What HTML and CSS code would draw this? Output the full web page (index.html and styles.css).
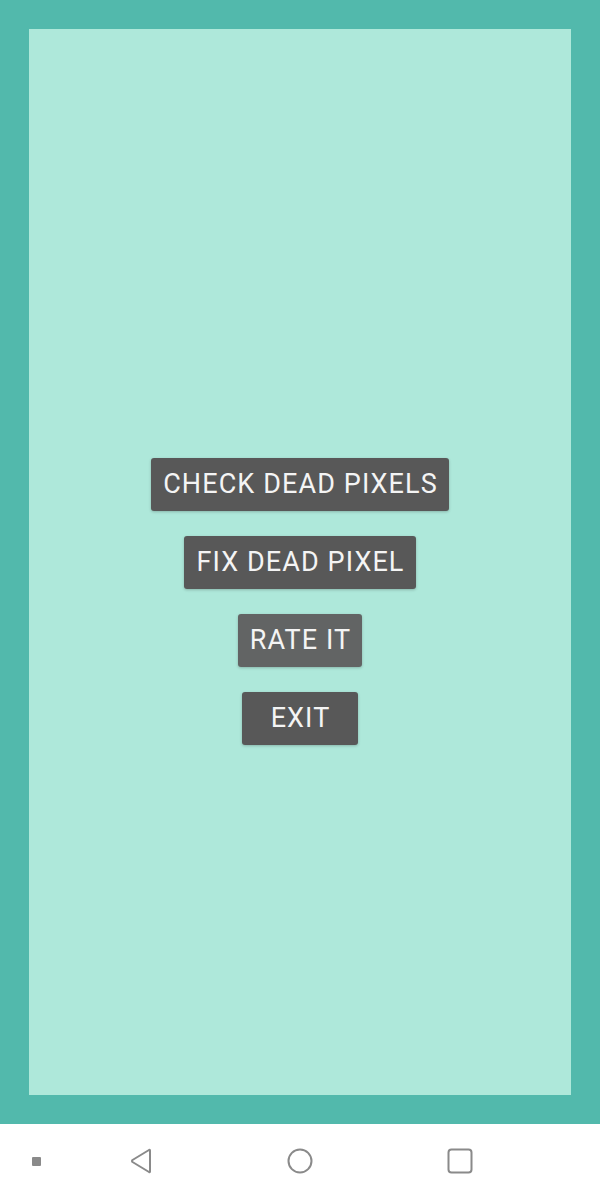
FILE: index.html
```html
<!DOCTYPE html>
<html>
<head>
<meta charset="utf-8">
<link rel="stylesheet" href="styles.css">
</head>
<body>
<div class="frame">
  <div class="panel">
    <div class="menu">
      <button class="btn">CHECK DEAD PIXELS</button>
      <button class="btn">FIX DEAD PIXEL</button>
      <button class="btn btn-light">RATE IT</button>
      <button class="btn">EXIT</button>
    </div>
  </div>
</div>
<nav class="navbar">
  <span class="nav-dot"></span>
  <svg class="nav-icon nav-back" width="26" height="26" viewBox="0 0 26 26"><path d="M21 2.5 L21 23.5 Q21 24.5 20 24 L3.5 14 Q2.5 13 3.5 12 L20 2 Q21 1.5 21 2.5 Z" fill="none" stroke="#8a8a8a" stroke-width="2" stroke-linejoin="round"/></svg>
  <svg class="nav-icon nav-home" width="26" height="26" viewBox="0 0 26 26"><circle cx="13" cy="13" r="11.5" fill="none" stroke="#8a8a8a" stroke-width="2"/></svg>
  <svg class="nav-icon nav-recent" width="26" height="26" viewBox="0 0 26 26"><rect x="1.5" y="1.5" width="23" height="23" rx="3" fill="none" stroke="#8a8a8a" stroke-width="2"/></svg>
</nav>
</body>
</html>
```

FILE: styles.css
```css
html, body {
  margin: 0;
  padding: 0;
}
body {
  width: 600px;
  height: 1200px;
  display: flex;
  flex-direction: column;
  font-family: Roboto, "Noto Sans", sans-serif;
  background: #ffffff;
}
.frame {
  height: 1124px;
  box-sizing: border-box;
  padding: 29px;
  background: #52b9ac;
}
.panel {
  height: 100%;
  box-sizing: border-box;
  background: #aee8da;
  padding-top: 78px;
  display: flex;
  flex-direction: column;
  justify-content: center;
}
.menu {
  display: flex;
  flex-direction: column;
  align-items: center;
  gap: 25px;
}
.btn {
  height: 53px;
  min-width: 116px;
  padding: 0 11px 0 12px;
  border: none;
  border-radius: 3px;
  background: #585858;
  color: #f4f4f4;
  font-family: Roboto, "Noto Sans", sans-serif;
  font-size: 27px;
  font-weight: 400;
  letter-spacing: 1.1px;
  box-shadow: 0 1px 3px rgba(0, 0, 0, 0.22);
}
.btn-light {
  background: #626464;
}
.navbar {
  height: 76px;
  display: flex;
  align-items: center;
}
.nav-dot {
  width: 9px;
  height: 9px;
  border-radius: 1px;
  background: #8a8a8a;
  margin-left: 32px;
  margin-top: -2px;
}
.nav-icon {
  margin-top: -2px;
}
.nav-back {
  margin-left: 88px;
}
.nav-home {
  margin-left: 132px;
}
.nav-recent {
  margin-left: 134px;
}
```
